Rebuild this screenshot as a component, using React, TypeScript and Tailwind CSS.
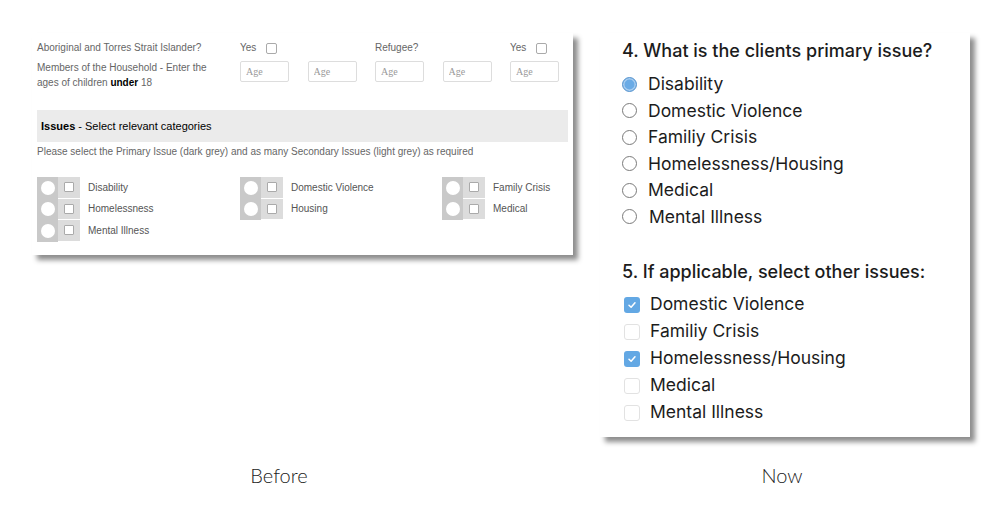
import React from "react";

const beforeIssues = [
  ["Disability", "Homelessness", "Mental Illness"],
  ["Domestic Violence", "Housing"],
  ["Family Crisis", "Medical"],
];

const primary = [
  { label: "Disability", checked: true },
  { label: "Domestic Violence" },
  { label: "Familiy Crisis" },
  { label: "Homelessness/Housing" },
  { label: "Medical" },
  { label: "Mental Illness", shift: true },
];

const secondary = [
  { label: "Domestic Violence", checked: true },
  { label: "Familiy Crisis" },
  { label: "Homelessness/Housing", checked: true },
  { label: "Medical" },
  { label: "Mental Illness" },
];

function SmallBox() {
  return <span className="inline-block w-[11px] h-[11px] rounded-[2px] border border-[#aaa] bg-white" />;
}

function AgeInput() {
  return (
    <input
      readOnly
      placeholder="Age"
      className="w-full h-[21px] rounded-[2px] border border-[#ddd] bg-white px-[5px] text-[10px] font-['Liberation_Serif',serif] placeholder:text-[#999] outline-none"
    />
  );
}

function IssueColumn({ items }: { items: string[] }) {
  return (
    <div className="flex">
      {/* dark grey = primary radio, light grey = secondary checkbox */}
      <div className="w-[21px] bg-[#c9c9c9] flex flex-col">
        {items.map((i) => (
          <div key={i} className="h-[21.5px] flex items-center justify-center">
            <span className="w-[14px] h-[14px] rounded-full bg-white" />
          </div>
        ))}
      </div>
      <div className="flex flex-col gap-[1px]">
        {items.map((i) => (
          <div key={i} className="h-[20.5px] flex items-center">
            <div className="w-[22px] h-full bg-[#dcdcdc] flex items-center justify-center">
              <span className="w-[10px] h-[10px] rounded-[1px] border border-[#aaa] bg-white" />
            </div>
            <span className="ml-[8px] text-[10px] text-[#555]">{i}</span>
          </div>
        ))}
      </div>
    </div>
  );
}

function BeforePanel() {
  return (
    <div className="w-[541px] h-[222px] bg-white px-[5px] pt-[8px] shadow-[5px_5px_5px_rgba(0,0,0,0.45)] font-['Liberation_Sans',Arial,sans-serif] text-[#666]">
      <div className="grid grid-cols-[184.5px_49px_49px_49px_49px_49px] gap-x-[18.5px] gap-y-[6px] text-[10px]">
        <div className="leading-[14px] whitespace-nowrap">Aboriginal and Torres Strait Islander?</div>
        <div className="flex items-center gap-[10px] leading-[14px]">
          Yes <SmallBox />
        </div>
        <div />
        <div className="leading-[14px]">Refugee?</div>
        <div />
        <div className="flex items-center gap-[10px] leading-[14px]">
          Yes <SmallBox />
        </div>

        <div className="leading-[15px] -mt-[1px] whitespace-nowrap">
          Members of the Household - Enter the
          <br />
          ages of children <b className="text-black">under</b> 18
        </div>
        <AgeInput />
        <AgeInput />
        <AgeInput />
        <AgeInput />
        <AgeInput />
      </div>

      <div className="mt-[20px] h-[32px] bg-[#ebebeb] flex items-center pl-[4px] text-[11px] text-black">
        <b>Issues</b>&nbsp;- Select relevant categories
      </div>
      <p className="mt-[3px] text-[10px] leading-[13px]">
        Please select the Primary Issue (dark grey) and as many Secondary Issues (light grey) as required
      </p>

      <div className="mt-[19px] grid grid-cols-[203px_202px_auto] items-start">
        {beforeIssues.map((col, i) => (
          <IssueColumn key={i} items={col} />
        ))}
      </div>
    </div>
  );
}

function Radio({ checked }: { checked?: boolean }) {
  return checked ? (
    <span className="w-[15px] h-[15px] rounded-full border border-[#5d97cf] bg-[#6aabe6] shadow-[inset_0_0_0_1.5px_#a9cdef]" />
  ) : (
    <span className="w-[15px] h-[15px] rounded-full border border-[#7a7a7a] bg-white" />
  );
}

function Check({ checked }: { checked?: boolean }) {
  return checked ? (
    <span className="w-[16px] h-[16px] rounded-[3px] bg-[#63a8e4] flex items-center justify-center">
      <svg width="10" height="10" viewBox="0 0 10 10" fill="none">
        <path d="M2 5.3 L4.1 7.3 L8 2.8" stroke="white" strokeWidth="1.5" strokeLinecap="round" strokeLinejoin="round" />
      </svg>
    </span>
  ) : (
    <span className="w-[16px] h-[16px] rounded-[3px] border border-[#e2e2e2] bg-white" />
  );
}

function NowPanel() {
  return (
    <div className="w-[370px] h-[404px] bg-white pl-[22px] pt-[5px] shadow-[5px_5px_5px_rgba(0,0,0,0.45)] font-['Inter',sans-serif] text-[#1c1c1c]">
      <h2 className="text-[18px] leading-[25px] font-medium">4. What is the clients primary issue?</h2>
      <ul className="mt-[8px]">
        {primary.map((o) => (
          <li key={o.label} className="h-[26.5px] flex items-center gap-[11px] text-[17.5px]">
            <Radio checked={o.checked} />
            <span className={o.shift ? "ml-[1px]" : ""}>{o.label}</span>
          </li>
        ))}
      </ul>
      <h2 className="mt-[29px] text-[18px] leading-[25px] font-medium">5. If applicable, select other issues:</h2>
      <ul className="mt-[7px] pl-[2px]">
        {secondary.map((o) => (
          <li key={o.label} className="h-[27px] flex items-center gap-[10px] text-[17.5px]">
            <Check checked={o.checked} />
            <span>{o.label}</span>
          </li>
        ))}
      </ul>
    </div>
  );
}

export default function App() {
  return (
    <div className="w-[1000px] h-[509px] bg-white overflow-hidden">
      <div className="flex items-start pt-[33px]">
        <div className="ml-[32px]">
          <BeforePanel />
        </div>
        <div className="ml-[27px]">
          <NowPanel />
        </div>
      </div>
      <div className="flex mt-[25px] font-['Lato',sans-serif] font-light text-[20px] leading-[26px] text-[#222]">
        <div className="w-[558px] shrink-0 text-center">Before</div>
        <div className="w-[442px] shrink-0 pl-[6px] text-center">Now</div>
      </div>
    </div>
  );
}
